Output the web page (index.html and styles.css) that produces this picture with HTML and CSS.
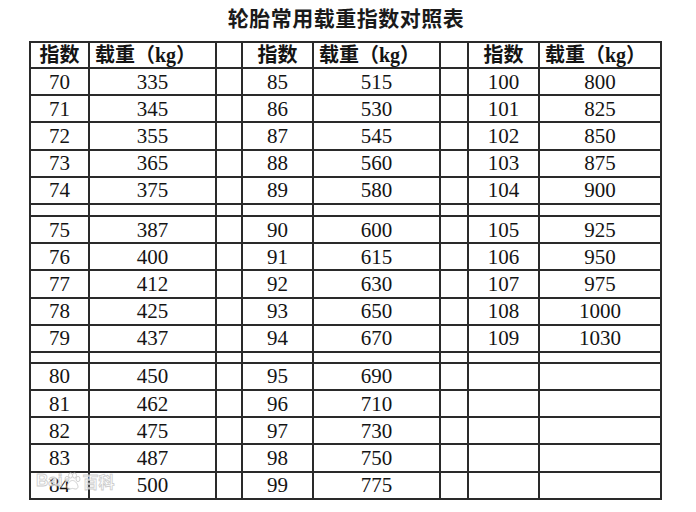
FILE: index.html
```html
<!DOCTYPE html>
<html lang="zh-CN">
<head>
<meta charset="utf-8">
<title>轮胎常用载重指数对照表</title>
<link rel="stylesheet" href="styles.css">
</head>
<body>
<div class="page">
  <h1 class="title">轮胎常用载重指数对照表</h1>
  <div class="sheet">
    <table class="load-table">
      <colgroup>
        <col class="c-idx1"><col class="c-load"><col class="c-gap1">
        <col class="c-idx"><col class="c-load"><col class="c-gap2">
        <col class="c-idx"><col class="c-load3">
      </colgroup>
      <thead>
        <tr class="head">
          <th>指数</th><th class="lh">载重（kg）</th><th></th>
          <th>指数</th><th class="lh">载重（kg）</th><th></th>
          <th>指数</th><th class="lh">载重（kg）</th>
        </tr>
      </thead>
      <tbody>
        <tr><td>70</td><td>335</td><td></td><td>85</td><td>515</td><td></td><td>100</td><td>800</td></tr>
        <tr><td>71</td><td>345</td><td></td><td>86</td><td>530</td><td></td><td>101</td><td>825</td></tr>
        <tr><td>72</td><td>355</td><td></td><td>87</td><td>545</td><td></td><td>102</td><td>850</td></tr>
        <tr><td>73</td><td>365</td><td></td><td>88</td><td>560</td><td></td><td>103</td><td>875</td></tr>
        <tr><td>74</td><td>375</td><td></td><td>89</td><td>580</td><td></td><td>104</td><td>900</td></tr>
        <tr class="sep"><td></td><td></td><td></td><td></td><td></td><td></td><td></td><td></td></tr>
        <tr><td>75</td><td>387</td><td></td><td>90</td><td>600</td><td></td><td>105</td><td>925</td></tr>
        <tr><td>76</td><td>400</td><td></td><td>91</td><td>615</td><td></td><td>106</td><td>950</td></tr>
        <tr><td>77</td><td>412</td><td></td><td>92</td><td>630</td><td></td><td>107</td><td>975</td></tr>
        <tr><td>78</td><td>425</td><td></td><td>93</td><td>650</td><td></td><td>108</td><td>1000</td></tr>
        <tr><td>79</td><td>437</td><td></td><td>94</td><td>670</td><td></td><td>109</td><td>1030</td></tr>
        <tr class="sep sep2"><td></td><td></td><td></td><td></td><td></td><td></td><td></td><td></td></tr>
        <tr><td>80</td><td>450</td><td></td><td>95</td><td>690</td><td></td><td></td><td></td></tr>
        <tr><td>81</td><td>462</td><td></td><td>96</td><td>710</td><td></td><td></td><td></td></tr>
        <tr><td>82</td><td>475</td><td></td><td>97</td><td>730</td><td></td><td></td><td></td></tr>
        <tr><td>83</td><td>487</td><td></td><td>98</td><td>750</td><td></td><td></td><td></td></tr>
        <tr><td>84</td><td>500</td><td></td><td>99</td><td>775</td><td></td><td></td><td></td></tr>
      </tbody>
    </table>
    <div class="watermark">
      <span class="wm-bai">Bai</span>
      <svg class="wm-paw" width="18" height="18" viewBox="0 0 18 18" aria-hidden="true">
        <g fill="#fff" stroke="#c8c8c8" stroke-width="1">
          <ellipse cx="4" cy="7" rx="2" ry="2.6"/>
          <ellipse cx="7.5" cy="3.5" rx="2" ry="2.6"/>
          <ellipse cx="11.5" cy="3.5" rx="2" ry="2.6"/>
          <ellipse cx="15" cy="7" rx="2" ry="2.6"/>
          <path d="M9.5 8.5c-3 0-5.5 4-5.5 6.3 0 1.8 1.6 2.4 3 2.2 1.1-.2 1.7-.6 2.5-.6s1.4.4 2.5.6c1.4.2 3-.4 3-2.2 0-2.3-2.5-6.3-5.5-6.3z"/>
        </g>
      </svg>
      <span class="wm-ke">百科</span>
    </div>
  </div>
</div>
</body>
</html>
```

FILE: styles.css
```css
html, body {
  margin: 0;
  padding: 0;
  background: #ffffff;
}

.page {
  width: 696px;
  height: 512px;
  overflow: hidden;
}

.title {
  margin: 0;
  height: 35px;
  line-height: 35px;
  text-align: center;
  padding-right: 4px;
  font-family: "Noto Sans CJK SC", sans-serif;
  font-size: 21px;
  font-weight: 700;
  color: #1a1a1a;
  letter-spacing: 0.5px;
}

.sheet {
  position: relative;
  margin-top: 6px;
  padding-left: 29px;
}

.load-table {
  border-collapse: collapse;
  table-layout: fixed;
  width: 631px;
  color: #141414;
}

.c-idx1 { width: 59px; }
.c-load { width: 127px; }
.c-gap1 { width: 26px; }
.c-idx { width: 71px; }
.c-gap2 { width: 28px; }
.c-load3 { width: 122px; }

.load-table th,
.load-table td {
  border: 2px solid #2a2a2a;
  padding: 0;
  text-align: center;
  vertical-align: middle;
  overflow: hidden;
  white-space: nowrap;
}

.load-table th {
  height: 24px;
  font-family: "Liberation Serif", "Noto Sans CJK SC", serif;
  font-size: 20px;
  font-weight: 700;
  line-height: 22px;
}

.load-table th.lh {
  text-align: left;
  padding-left: 5px;
}

.load-table td {
  height: 25.2px;
  font-family: "Liberation Serif", serif;
  font-size: 21px;
  line-height: 22px;
}

.load-table tr.sep td {
  height: 10px;
}

.load-table tr.sep2 td {
  height: 9px;
}

.watermark {
  position: absolute;
  left: 36px;
  top: 428px;
  display: flex;
  align-items: center;
  gap: 1px;
  color: #ffffff;
  opacity: 0.85;
  pointer-events: none;
}

.wm-bai {
  font-family: "Liberation Sans", sans-serif;
  font-size: 17px;
  font-weight: 700;
  -webkit-text-stroke: 0.8px #c4c4c4;
}

.wm-ke {
  font-family: "Noto Sans CJK SC", sans-serif;
  font-size: 16px;
  font-weight: 700;
  -webkit-text-stroke: 0.8px #c4c4c4;
}
```
